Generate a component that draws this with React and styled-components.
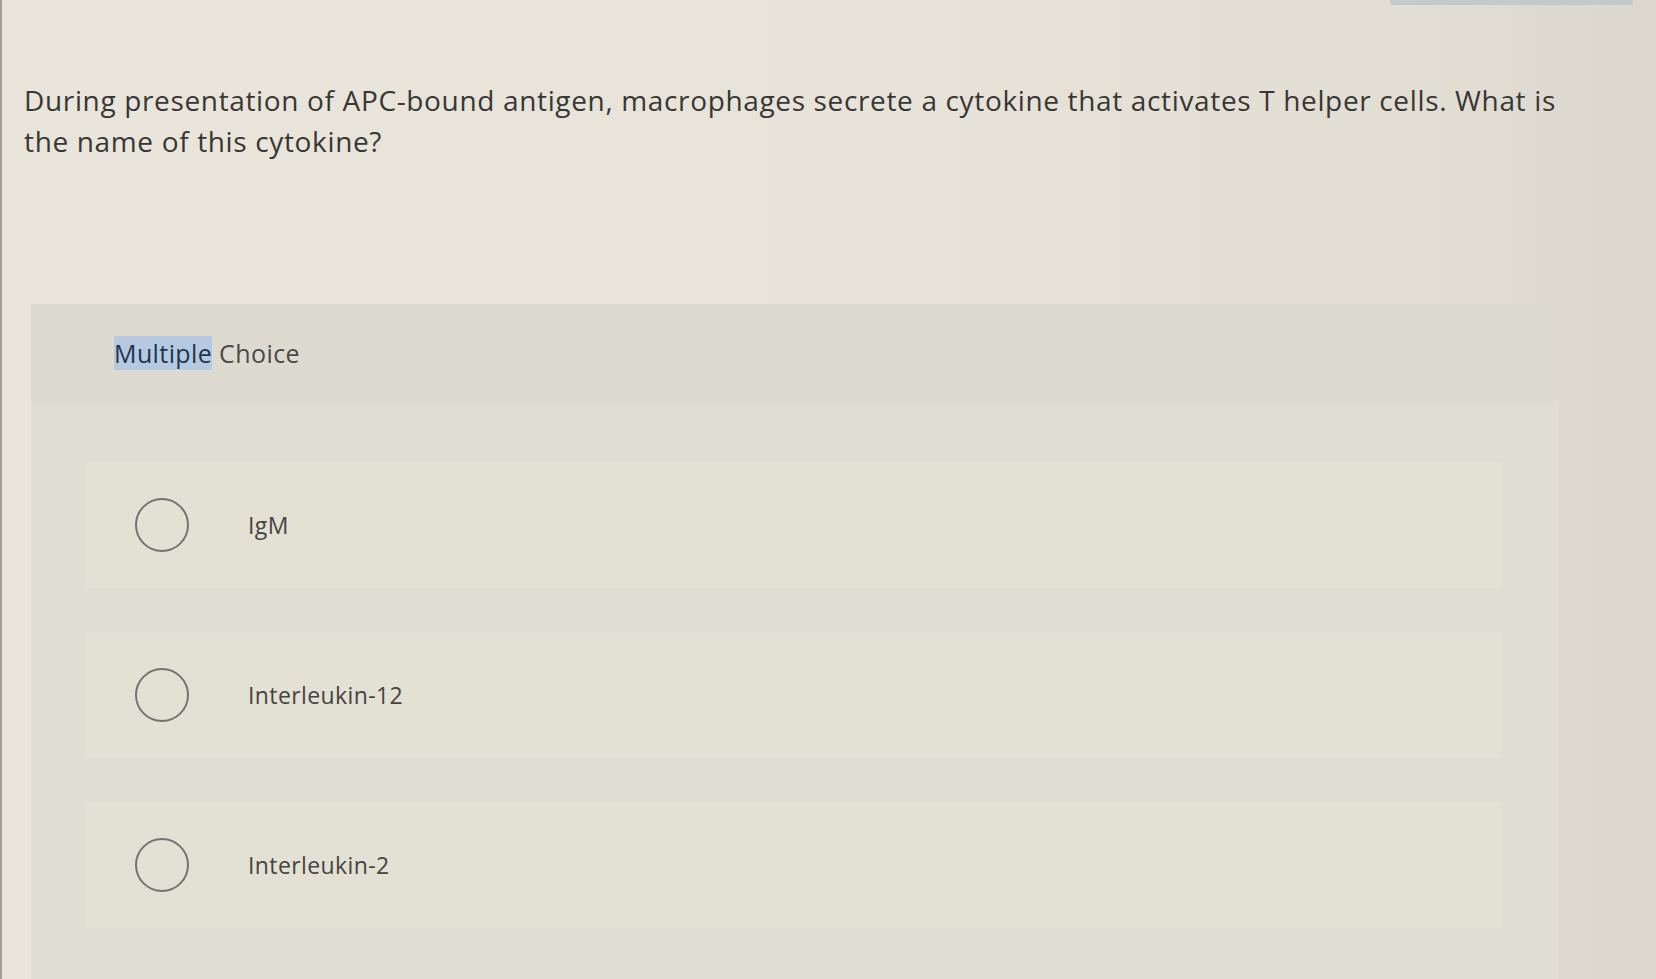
import React from 'react';
import styled, { createGlobalStyle } from 'styled-components';

const GlobalStyle = createGlobalStyle`
  html, body {
    margin: 0;
    padding: 0;
  }
  body {
    min-height: 979px;
    background: linear-gradient(90deg, #e9e5da 0%, #e7e3d8 55%, #e1ddd3 88%, #dbd7cf 100%);
    font-family: "Open Sans", Lato, sans-serif;
    border-left: 2px solid #a19f98;
    box-sizing: border-box;
    overflow: hidden;
  }
`;

const options = [
  { id: 'a', label: 'IgM' },
  { id: 'b', label: 'Interleukin-12' },
  { id: 'c', label: 'Interleukin-2' },
];

const App = () => {
  return (
    <>
      <GlobalStyle />
      <Page>
        <TopBar>
          <TopButton />
        </TopBar>

        <Question>
          During presentation of APC-bound antigen, macrophages secrete a cytokine that activates T helper cells. What is the name of this cytokine?
        </Question>

        <Card>
          <CardHeader>
            <Heading>
              <Highlight>Multiple</Highlight> Choice
            </Heading>
          </CardHeader>

          <OptionList>
            {options.map((opt) => (
              <Option key={opt.id}>
                <Radio />
                <OptionLabel>{opt.label}</OptionLabel>
              </Option>
            ))}
          </OptionList>
        </Card>
      </Page>
    </>
  );
};

const Page = styled.main`
  display: flex;
  flex-direction: column;
  padding-left: 22px;
`;

const TopBar = styled.div`
  display: flex;
  justify-content: flex-end;
  height: 5px;
  padding-right: 23px;
`;

const TopButton = styled.div`
  width: 243px;
  height: 5px;
  background-color: #c4cacb;
  border-radius: 0 0 3px 3px;
`;

const Question = styled.p`
  margin: 75px 0 0;
  width: 1560px;
  font-size: 28px;
  line-height: 41px;
  letter-spacing: 0.65px;
  color: #383735;
`;

const Card = styled.section`
  margin: 142px 0 0 7px;
  width: 1528px;
  background-color: #e0ddd2;
  display: flex;
  flex-direction: column;
`;

const CardHeader = styled.div`
  height: 98px;
  display: flex;
  align-items: center;
  padding-left: 83px;
  background-color: #dddacf;
`;

const Heading = styled.h2`
  margin: 0;
  font-size: 25px;
  font-weight: 400;
  letter-spacing: 0.4px;
  color: #4a4a48;
`;

const Highlight = styled.span`
  background-color: #b5cae1;
  color: #22354e;
`;

const OptionList = styled.div`
  display: flex;
  flex-direction: column;
  gap: 44px;
  padding: 60px 57px 60px 55px;
`;

const Option = styled.label`
  height: 126px;
  display: flex;
  align-items: center;
  gap: 59px;
  padding-left: 49px;
  background-color: #e3e0d4;
  cursor: pointer;
`;

const Radio = styled.span`
  width: 50px;
  height: 50px;
  border: 2px solid #747370;
  border-radius: 50%;
  flex-shrink: 0;
`;

const OptionLabel = styled.span`
  font-size: 23px;
  letter-spacing: 0.4px;
  color: #454542;
`;

export default App;
